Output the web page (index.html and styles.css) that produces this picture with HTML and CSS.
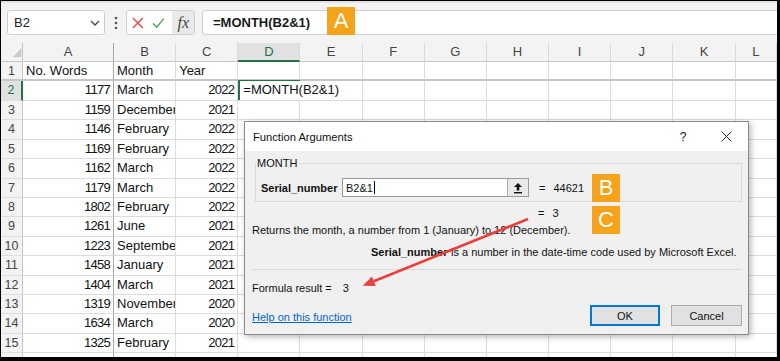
FILE: index.html
```html
<!DOCTYPE html>
<html>
<head>
<meta charset="utf-8">
<link rel="stylesheet" href="styles.css">
</head>
<body>
<div class="screen">
  <div class="formula-bar">
    <div class="name-box">
      <span class="name-text">B2</span>
      <svg class="chev" width="10" height="6" viewBox="0 0 10 6"><polyline points="1,1 5,5 9,1" fill="none" stroke="#444" stroke-width="1.3"/></svg>
    </div>
    <div class="grip">
      <svg width="4" height="14" viewBox="0 0 4 14"><circle cx="2" cy="2" r="1.3" fill="#555"/><circle cx="2" cy="7" r="1.3" fill="#555"/><circle cx="2" cy="12" r="1.3" fill="#555"/></svg>
    </div>
    <div class="fx-tools">
      <svg class="tool-icon" width="12" height="12" viewBox="0 0 12 12"><path d="M1 1L11 11M11 1L1 11" stroke="#e0484a" stroke-width="1.4" fill="none"/></svg>
      <svg class="tool-icon" width="13" height="12" viewBox="0 0 13 12"><polyline points="1,6.5 4.8,10.3 12,1.5" fill="none" stroke="#41a05a" stroke-width="1.4"/></svg>
      <span class="fx-btn"><i class="fx">fx</i></span>
    </div>
    <div class="formula-input">=MONTH(B2&amp;1)</div>
  </div>

  <div class="sheet">
    <div class="row hdr">
      <div class="corner"><svg width="22" height="19" viewBox="0 0 22 19"><polygon points="20.5,5 20.5,14 12,14" fill="#c9c9c9"/></svg></div>
      <div class="h fz">A</div><div class="h">B</div><div class="h">C</div><div class="h sel-col">D</div><div class="h">E</div><div class="h">F</div><div class="h">G</div><div class="h">H</div><div class="h">I</div><div class="h">J</div><div class="h">K</div><div class="h">L</div>
    </div>
    <div class="row r1">
      <div class="rh">1</div><div class="c fz">No. Words</div><div class="c">Month</div><div class="c">Year</div><div class="c"></div><div class="c"></div><div class="c"></div><div class="c"></div><div class="c"></div><div class="c"></div><div class="c"></div><div class="c"></div><div class="c"></div>
    </div>
    <div class="row">
      <div class="rh sel-row">2</div><div class="c n fz">1177</div><div class="c">March</div><div class="c n">2022</div><div class="c active"><span class="edit-text">=MONTH(B2&amp;1)</span></div><div class="c"></div><div class="c"></div><div class="c"></div><div class="c"></div><div class="c"></div><div class="c"></div><div class="c"></div><div class="c"></div>
    </div>
    <div class="row">
      <div class="rh">3</div><div class="c n fz">1159</div><div class="c">December</div><div class="c n">2021</div><div class="c"></div><div class="c"></div><div class="c"></div><div class="c"></div><div class="c"></div><div class="c"></div><div class="c"></div><div class="c"></div><div class="c"></div>
    </div>
    <div class="row">
      <div class="rh">4</div><div class="c n fz">1146</div><div class="c">February</div><div class="c n">2022</div><div class="c"></div><div class="c"></div><div class="c"></div><div class="c"></div><div class="c"></div><div class="c"></div><div class="c"></div><div class="c"></div><div class="c"></div>
    </div>
    <div class="row">
      <div class="rh">5</div><div class="c n fz">1169</div><div class="c">February</div><div class="c n">2022</div><div class="c"></div><div class="c"></div><div class="c"></div><div class="c"></div><div class="c"></div><div class="c"></div><div class="c"></div><div class="c"></div><div class="c"></div>
    </div>
    <div class="row">
      <div class="rh">6</div><div class="c n fz">1162</div><div class="c">March</div><div class="c n">2022</div><div class="c"></div><div class="c"></div><div class="c"></div><div class="c"></div><div class="c"></div><div class="c"></div><div class="c"></div><div class="c"></div><div class="c"></div>
    </div>
    <div class="row">
      <div class="rh">7</div><div class="c n fz">1179</div><div class="c">March</div><div class="c n">2022</div><div class="c"></div><div class="c"></div><div class="c"></div><div class="c"></div><div class="c"></div><div class="c"></div><div class="c"></div><div class="c"></div><div class="c"></div>
    </div>
    <div class="row">
      <div class="rh">8</div><div class="c n fz">1802</div><div class="c">February</div><div class="c n">2022</div><div class="c"></div><div class="c"></div><div class="c"></div><div class="c"></div><div class="c"></div><div class="c"></div><div class="c"></div><div class="c"></div><div class="c"></div>
    </div>
    <div class="row">
      <div class="rh">9</div><div class="c n fz">1261</div><div class="c">June</div><div class="c n">2021</div><div class="c"></div><div class="c"></div><div class="c"></div><div class="c"></div><div class="c"></div><div class="c"></div><div class="c"></div><div class="c"></div><div class="c"></div>
    </div>
    <div class="row">
      <div class="rh">10</div><div class="c n fz">1223</div><div class="c">September</div><div class="c n">2021</div><div class="c"></div><div class="c"></div><div class="c"></div><div class="c"></div><div class="c"></div><div class="c"></div><div class="c"></div><div class="c"></div><div class="c"></div>
    </div>
    <div class="row">
      <div class="rh">11</div><div class="c n fz">1458</div><div class="c">January</div><div class="c n">2021</div><div class="c"></div><div class="c"></div><div class="c"></div><div class="c"></div><div class="c"></div><div class="c"></div><div class="c"></div><div class="c"></div><div class="c"></div>
    </div>
    <div class="row">
      <div class="rh">12</div><div class="c n fz">1404</div><div class="c">March</div><div class="c n">2021</div><div class="c"></div><div class="c"></div><div class="c"></div><div class="c"></div><div class="c"></div><div class="c"></div><div class="c"></div><div class="c"></div><div class="c"></div>
    </div>
    <div class="row">
      <div class="rh">13</div><div class="c n fz">1319</div><div class="c">November</div><div class="c n">2020</div><div class="c"></div><div class="c"></div><div class="c"></div><div class="c"></div><div class="c"></div><div class="c"></div><div class="c"></div><div class="c"></div><div class="c"></div>
    </div>
    <div class="row">
      <div class="rh">14</div><div class="c n fz">1634</div><div class="c">March</div><div class="c n">2020</div><div class="c"></div><div class="c"></div><div class="c"></div><div class="c"></div><div class="c"></div><div class="c"></div><div class="c"></div><div class="c"></div><div class="c"></div>
    </div>
    <div class="row">
      <div class="rh">15</div><div class="c n fz">1325</div><div class="c">February</div><div class="c n">2021</div><div class="c"></div><div class="c"></div><div class="c"></div><div class="c"></div><div class="c"></div><div class="c"></div><div class="c"></div><div class="c"></div><div class="c"></div>
    </div>
    <div class="row">
      <div class="rh"></div><div class="c fz"></div><div class="c"></div><div class="c"></div><div class="c"></div><div class="c"></div><div class="c"></div><div class="c"></div><div class="c"></div><div class="c"></div><div class="c"></div><div class="c"></div><div class="c"></div>
    </div>
  </div>

  <div class="dialog">
    <div class="dlg-title">
      <span class="dlg-title-text">Function Arguments</span>
      <span class="dlg-help">?</span>
      <svg class="dlg-close" width="11" height="11" viewBox="0 0 11 11"><path d="M0.5 0.5L10.5 10.5M10.5 0.5L0.5 10.5" stroke="#222" stroke-width="1" fill="none"/></svg>
    </div>
    <div class="dlg-body">
      <fieldset class="group">
        <legend>MONTH</legend>
        <div class="arg-row">
          <span class="arg-label">Serial_number</span>
          <div class="arg-input">
            <span class="arg-value">B2&amp;1</span><span class="caret"></span>
            <span class="ref-btn">
              <svg width="10" height="12" viewBox="0 0 10 12"><polygon points="5,1 9,5 6.3,5 6.3,8.5 3.7,8.5 3.7,5 1,5" fill="#111"/><rect x="1" y="10" width="8" height="1.4" fill="#111"/></svg>
            </span>
          </div>
          <span class="arg-eq">=</span><span class="arg-val">44621</span>
        </div>
      </fieldset>
      <div class="eq-row"><span>=</span><span class="arg-val">3</span></div>
      <p class="desc">Returns the month, a number from 1 (January) to 12 (December).</p>
      <div class="arg-desc"><b class="arg-desc-label">Serial_number</b><span>is a number in the date-time code used by Microsoft Excel.</span></div>
      <div class="sep"></div>
      <div class="result">Formula result =<span class="result-val">3</span></div>
      <div class="footer">
        <a class="help-link" href="#">Help on this function</a>
        <span class="btn btn-ok">OK</span>
        <span class="btn">Cancel</span>
      </div>
    </div>
  </div>

  <span class="badge badge-a">A</span>
  <span class="badge badge-b">B</span>
  <span class="badge badge-c">C</span>

  <svg class="arrow" width="776" height="356" viewBox="0 0 776 356">
    <line x1="527" y1="218" x2="372.8" y2="280.2" stroke="#e8413c" stroke-width="2.6"/>
    <polygon points="361.7,284.7 374.7,285 370.9,275.6" fill="#e8413c"/>
  </svg>
</div>
</body>
</html>
```

FILE: styles.css
```css
* { box-sizing: border-box; }

body {
  margin: 0;
  background: #000;
  font-family: "Liberation Sans", Arial, sans-serif;
}

.screen {
  position: relative;
  width: 776px;
  height: 356px;
  margin: 1px 0 0 1px;
  background: #fff;
  overflow: hidden;
}

/* ---------- formula bar ---------- */
.formula-bar {
  height: 42px;
  background: #f3f3f3;
  border-top: 2px solid #e2e2e2;
  padding: 7px 0 0 6px;
  display: flex;
  align-items: flex-start;
}

.name-box {
  width: 98px;
  height: 25px;
  background: #fff;
  border: 1px solid #cfcfcf;
  border-radius: 3px;
  padding: 0 4px 0 6px;
  display: flex;
  align-items: center;
  justify-content: space-between;
  font-size: 13px;
  color: #222;
}

.grip {
  width: 21px;
  height: 25px;
  display: flex;
  align-items: center;
  justify-content: center;
}

.fx-tools {
  width: 69px;
  height: 25px;
  background: #fff;
  border: 1px solid #cfcfcf;
  border-radius: 3px;
  padding: 0 0 0 5px;
  display: flex;
  align-items: center;
}

.tool-icon { margin-right: 8px; }

.fx-btn {
  margin-left: auto;
  width: 22px;
  height: 23px;
  background: #e9e9e9;
  display: flex;
  align-items: center;
  justify-content: center;
}

.fx {
  font-family: "Liberation Serif", "Times New Roman", serif;
  font-style: italic;
  font-size: 16px;
  color: #444;
}

.formula-input {
  flex: 1;
  margin-left: 7px;
  margin-right: -4px;
  height: 25px;
  background: #fff;
  border: 1px solid #cfcfcf;
  border-radius: 3px;
  padding-left: 10px;
  font-size: 13px;
  font-weight: bold;
  line-height: 23px;
  color: #1a1a1a;
}

/* ---------- sheet ---------- */
.sheet {
  display: grid;
  grid-template-columns: 22px 91px repeat(10, 62.17px) 1fr;
  grid-template-rows: 19px;
  grid-auto-rows: 19.43px;
  font-size: 13px;
  color: #111;
}

.row { display: contents; }

.corner {
  background: #f3f3f3;
  border-right: 1px solid #c6c6c6;
  border-bottom: 1px solid #c6c6c6;
}
.corner svg { display: block; }

.h {
  background: #f3f3f3;
  color: #444;
  text-align: center;
  line-height: 18px;
  border-right: 1px solid #d8d8d8;
  border-bottom: 1px solid #c6c6c6;
}

.rh {
  background: #f3f3f3;
  color: #444;
  font-size: 12.5px;
  text-align: center;
  line-height: 18px;
  border-right: 1px solid #c6c6c6;
  border-bottom: 1px solid #dedede;
}

.sel-col {
  background: #e1e1e1;
  color: #217346;
  border-bottom: 2px solid #217346;
}

.sel-row {
  background: #e1e1e1;
  color: #217346;
  border-right: 2px solid #217346;
}

.c {
  border-right: 1px solid #dcdcdc;
  border-bottom: 1px solid #dcdcdc;
  padding: 0 3px;
  line-height: 18px;
  white-space: nowrap;
  overflow: hidden;
}

.n {
  text-align: right;
  letter-spacing: -0.7px;
}

.fz { border-right: 1px solid #a8a8a8; }
.r1 > div { border-bottom: 2px solid #c6c6c6; }

.active {
  position: relative;
  z-index: 2;
  overflow: visible;
  border-right: none;
  box-shadow: inset 2px 0 0 #217346, 0 -1px 0 #217346;
  padding-left: 3px;
}

.edit-text {
  display: inline-block;
  background: #fff;
  padding-right: 4px;
  margin-left: 2px;
}

/* ---------- dialog ---------- */
.dialog {
  position: absolute;
  left: 243px;
  top: 120px;
  width: 505px;
  height: 214px;
  background: #f0f0f0;
  border: 1px solid #8a8a8a;
  box-shadow: 2px 2px 6px rgba(0, 0, 0, 0.28);
  font-size: 11px;
  color: #111;
}

.dlg-title {
  height: 29px;
  background: #fff;
  display: flex;
  align-items: center;
  padding: 0 16px 0 8px;
}

.dlg-title-text { flex: 1; font-size: 11.2px; }

.dlg-help {
  width: 12px;
  text-align: center;
  font-size: 12px;
  margin-right: 32px;
}

.dlg-body { padding: 6px 6px 0 0; }

.group {
  margin: 0 0 0 10px;
  padding: 8px 0 4px 0;
  border: 1px solid #dadada;
  min-width: 0;
}

.group legend {
  padding: 0 2px 0 1px;
  font-size: 11px;
  line-height: 13px;
}

.arg-row {
  height: 19px;
  padding-left: 5px;
  display: flex;
  align-items: center;
}

.arg-label {
  width: 81px;
  font-weight: bold;
}

.arg-input {
  width: 187px;
  height: 19px;
  background: #fff;
  border: 1px solid #9a9a9a;
  display: flex;
  align-items: center;
  padding-left: 3px;
}

.caret {
  width: 1px;
  height: 13px;
  background: #000;
  margin-left: 1px;
}

.ref-btn {
  margin-left: auto;
  width: 21px;
  height: 17px;
  background: #e9e9e9;
  border-left: 1px solid #adadad;
  display: flex;
  align-items: center;
  justify-content: center;
}

.arg-eq { margin-left: 10px; }
.arg-val { margin-left: 8px; }

.eq-row {
  margin-top: 5px;
  padding-left: 293px;
  line-height: 13px;
}

.desc {
  margin: 4px 0 0 0;
  padding-left: 7px;
  line-height: 13px;
}

.arg-desc {
  margin-top: 9px;
  padding-left: 126px;
  line-height: 13px;
  white-space: nowrap;
  display: flex;
}

.arg-desc-label { width: 80px; flex: none; }

.sep {
  margin: 10px 0 0 7px;
  border-top: 1px solid #d9d9d9;
}

.result {
  margin-top: 12px;
  padding-left: 7px;
  line-height: 13px;
}

.result-val { margin-left: 11px; }

.footer {
  margin-top: 10px;
  padding-left: 7px;
  display: flex;
  align-items: center;
}

.help-link {
  color: #0066cc;
  text-decoration: underline;
  line-height: 13px;
  margin-top: 3px;
  margin-right: auto;
}

.btn {
  width: 71px;
  height: 21px;
  background: #e1e1e1;
  border: 1px solid #adadad;
  display: flex;
  align-items: center;
  justify-content: center;
  margin-left: 11px;
}

.btn-ok {
  width: 70px;
  border: 2px solid #0078d7;
}

/* ---------- annotations ---------- */
.badge {
  position: absolute;
  width: 28px;
  height: 28px;
  background: #f5a31a;
  color: #fff;
  font-size: 22px;
  line-height: 28px;
  text-align: center;
}

.badge-a { left: 326px; top: 6px; }
.badge-b { left: 591px; top: 173px; }
.badge-c { left: 591px; top: 205px; }

.arrow {
  position: absolute;
  left: 0;
  top: 0;
  pointer-events: none;
}
```
